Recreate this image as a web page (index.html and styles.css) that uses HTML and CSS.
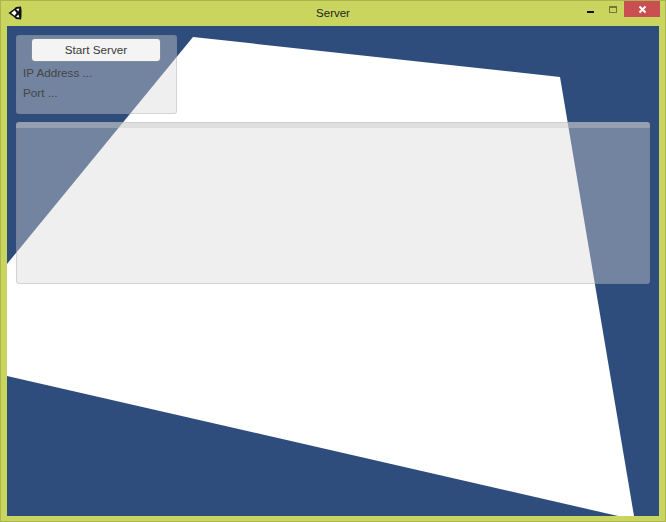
FILE: index.html
```html
<!DOCTYPE html>
<html lang="en">
<head>
  <meta charset="UTF-8" />
  <title>Server</title>
  <link rel="stylesheet" href="styles.css">
</head>
<body>
  <div class="window">
    <div class="titlebar">
      <svg class="app-icon" width="14" height="14" viewBox="0 0 14 14">
        <path d="M0.5 7 L6 3 L8 1 L13 0.5 L13.5 4 L13.5 10 L13 13.5 L8 13 L6 11 Z" fill="#111" />
        <path d="M3.2 7 L6.6 4.2 L8.6 7 L6.6 9.8 Z" fill="#fff" />
        <path d="M8 3 L11.4 2.4 L10.4 5.6 Z M8 11 L11.4 11.6 L10.4 8.4 Z" fill="#fff" />
      </svg>
      <span class="title">Server</span>
      <div class="controls">
        <span class="minimize"></span>
        <span class="maximize"></span>
        <span class="close">
          <svg width="9" height="9" viewBox="0 0 9 9"><path d="M1.5 1.5 L7.5 7.5 M7.5 1.5 L1.5 7.5" stroke="#fff" stroke-width="2" /></svg>
        </span>
      </div>
    </div>
    <div class="client">
      <svg class="scene" width="652" height="490" viewBox="0 0 652 490">
        <polygon points="186,11 553,51 627,490 611,490 0,350 0,238" fill="#fff" />
      </svg>
      <div class="panel server-box">
        <button class="start-btn">Start Server</button>
        <div class="field">IP Address ...</div>
        <div class="field">Port ...</div>
      </div>
      <div class="panel log-box">
        <div class="log-header"></div>
      </div>
    </div>
  </div>
</body>
</html>
```

FILE: styles.css
```css
html, body {
  margin: 0;
  padding: 0;
}

body {
  font-family: 'Liberation Sans', Arial, sans-serif;
  background-color: #c9d55f;
}

.window {
  width: 666px;
  height: 522px;
  box-sizing: border-box;
  background-color: #c9d55f;
  border: 1px solid #a9b54f;
  display: flex;
  flex-direction: column;
}

.titlebar {
  height: 25px;
  display: flex;
  align-items: center;
  position: relative;
  flex-shrink: 0;
}

.app-icon {
  margin-left: 7px;
  margin-top: -1px;
}

.title {
  position: absolute;
  left: 0;
  right: 0;
  top: 5px;
  text-align: center;
  font-size: 11.5px;
  line-height: 15px;
  color: #222;
}

.controls {
  position: absolute;
  top: 0;
  right: 5px;
  display: flex;
  align-items: flex-start;
}

.minimize {
  width: 7px;
  height: 2px;
  background-color: #111;
  margin-top: 10px;
  margin-right: 15px;
}

.maximize {
  width: 6px;
  height: 4px;
  border: 1px solid #6f7a38;
  border-top-width: 2px;
  margin-top: 5px;
  margin-right: 7px;
}

.close {
  width: 36px;
  height: 16px;
  background-color: #c94f52;
  display: flex;
  align-items: center;
  justify-content: center;
}

.client {
  position: relative;
  margin: 0 6px 5px 6px;
  height: 490px;
  background-color: #2f4d7c;
  overflow: hidden;
  padding: 9px;
  box-sizing: border-box;
}

.scene {
  position: absolute;
  left: 0;
  top: 0;
}

.panel {
  position: relative;
  box-sizing: border-box;
  background-color: rgba(215, 215, 215, 0.4);
  border-radius: 3px;
  box-shadow: inset 0 0 0 1px rgba(120, 120, 120, 0.22);
}

.server-box {
  width: 161px;
  height: 79px;
  padding: 4px 7px 0 7px;
}

.start-btn {
  display: block;
  width: 128px;
  height: 22px;
  margin: 0 0 0 9px;
  padding: 0 0 2px 0;
  font-family: inherit;
  font-size: 11.7px;
  color: #383838;
  background-color: #f4f4f4;
  border: none;
  border-radius: 3px;
  box-shadow: 0 0 0 1px rgba(150, 150, 150, 0.4);
}

.field {
  font-size: 11.7px;
  line-height: 20px;
  color: #454545;
}

.start-btn + .field {
  margin-top: 2px;
}

.log-box {
  width: 634px;
  height: 162px;
  margin-top: 8px;
}

.log-header {
  height: 6px;
  background-color: rgba(200, 200, 200, 0.4);
  border-radius: 3px 3px 0 0;
}
```
